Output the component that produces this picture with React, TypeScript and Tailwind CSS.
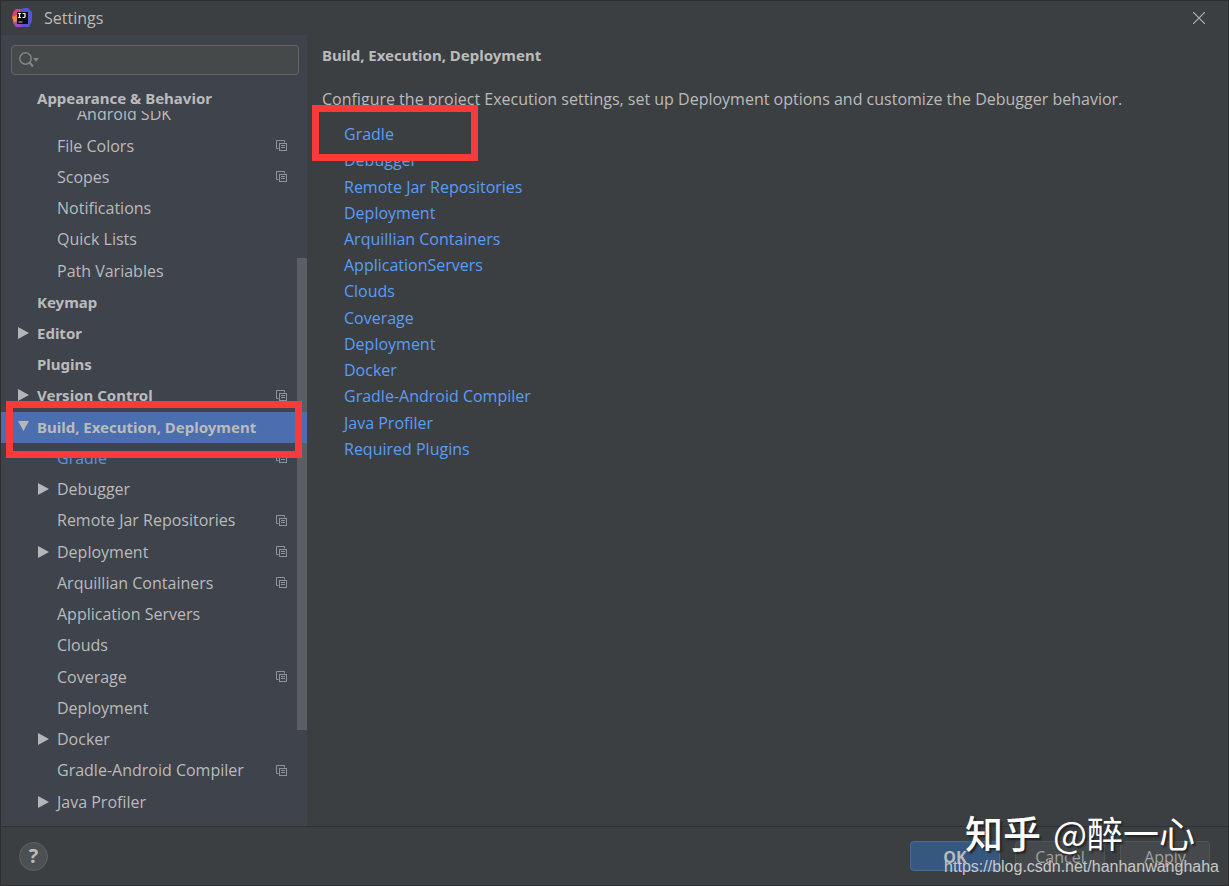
import { useState } from 'react';

type TreeItem = {
  label: string;
  level: 0 | 1;
  arrow?: 'closed' | 'open';
  project?: boolean;
  selected?: boolean;
  modified?: boolean;
};

const treeItems: TreeItem[] = [
  { label: 'File Colors', level: 1, project: true },
  { label: 'Scopes', level: 1, project: true },
  { label: 'Notifications', level: 1 },
  { label: 'Quick Lists', level: 1 },
  { label: 'Path Variables', level: 1 },
  { label: 'Keymap', level: 0 },
  { label: 'Editor', level: 0, arrow: 'closed' },
  { label: 'Plugins', level: 0 },
  { label: 'Version Control', level: 0, arrow: 'closed', project: true },
  { label: 'Build, Execution, Deployment', level: 0, arrow: 'open', selected: true },
  { label: 'Gradle', level: 1, project: true, modified: true },
  { label: 'Debugger', level: 1, arrow: 'closed' },
  { label: 'Remote Jar Repositories', level: 1, project: true },
  { label: 'Deployment', level: 1, arrow: 'closed', project: true },
  { label: 'Arquillian Containers', level: 1, project: true },
  { label: 'Application Servers', level: 1 },
  { label: 'Clouds', level: 1 },
  { label: 'Coverage', level: 1, project: true },
  { label: 'Deployment', level: 1 },
  { label: 'Docker', level: 1, arrow: 'closed' },
  { label: 'Gradle-Android Compiler', level: 1, project: true },
  { label: 'Java Profiler', level: 1, arrow: 'closed' },
];

const links = [
  'Gradle',
  'Debugger',
  'Remote Jar Repositories',
  'Deployment',
  'Arquillian Containers',
  'ApplicationServers',
  'Clouds',
  'Coverage',
  'Deployment',
  'Docker',
  'Gradle-Android Compiler',
  'Java Profiler',
  'Required Plugins',
];

const AppIcon = () => (
  <svg viewBox="0 0 20 20" className="h-5 w-5" aria-hidden="true">
    <path d="M1 4 4 1h6l3 8-8 8-4-2 1-4-2-1z" fill="#d8436f" />
    <path d="M0 9 5 7v7l-3 1z" fill="#ee8544" />
    <path d="M8 3 11 0h5l4 4v9l-3 6h-6L4 16l8-4z" fill="#5457cf" />
    <path d="M1 15l4-2 6 6H4z" fill="#a04bb8" />
    <rect x="5" y="4" width="11" height="12" fill="#0b0a10" />
    <path d="M6 5.5h3M7.5 5.5v4M6 9.5h3M10.5 5.5h2.5v3q0 1-1 1h-1.5" stroke="#fff" strokeWidth="1.2" fill="none" />
    <path d="M6.5 14h4" stroke="#bbb" strokeWidth="1" />
  </svg>
);

const ProjectIcon = () => (
  <svg viewBox="0 0 11 11" className="h-[11px] w-[11px] shrink-0" fill="none" stroke="#8d949b" aria-hidden="true">
    <path d="M2.5 8.5h-2v-8h8v2" />
    <rect x="3.5" y="3.5" width="7" height="7" />
    <path d="M5 5.5h4M5 7.5h4" />
  </svg>
);

const Arrow = ({ open }: { open: boolean }) => (
  <svg viewBox="0 0 12 12" className="h-3 w-3" fill="#b4b6b8" aria-hidden="true">
    {open ? <path d="M1 0h11L6.5 10z" /> : <path d="M1 0v12l11-6z" />}
  </svg>
);

const TreeRow = ({ item }: { item: TreeItem }) => (
  <li className={`flex min-h-0 flex-1 items-center pb-0.5 pr-5 ${item.selected ? 'bg-[#4b6eaf]' : ''} ${item.level === 0 ? 'pl-4' : 'pl-9'}`}>
    <span className="w-5 shrink-0">{item.arrow && <Arrow open={item.arrow === 'open'} />}</span>
    <span
      className={`flex-1 whitespace-nowrap ${item.level === 0 ? "font-['Noto_Sans'] text-[15px] font-bold" : ''} ${item.modified ? 'text-[#5a93de]' : ''}`}
    >
      {item.label}
    </span>
    {item.project && <ProjectIcon />}
  </li>
);

const App = () => {
  const [query, setQuery] = useState('');

  return (
    <div className="relative flex h-screen flex-col overflow-hidden border border-[#2c2e30] bg-[#3c3f41] font-['Open_Sans','Noto_Sans',sans-serif] text-base leading-5 text-[#bbbbbb]">
      <header className="flex h-[34px] shrink-0 items-center pl-[11px] pr-[23px]">
        <AppIcon />
        <h1 className="ml-3 flex-1">Settings</h1>
        <button type="button" aria-label="Close">
          <svg viewBox="0 0 12 12" className="h-3 w-3" stroke="#b0b2b4" strokeWidth="1.2" aria-hidden="true">
            <path d="M0 0l12 12M12 0 0 12" />
          </svg>
        </button>
      </header>

      <div className="flex min-h-0 flex-1">
        <aside className="relative flex w-[306px] shrink-0 flex-col bg-[#3e434c] pb-2">
          <div className="relative mx-[10px] mr-2 mt-[10px] h-[30px] shrink-0">
            <svg viewBox="0 0 22 16" className="absolute left-2 top-[7px] h-4 w-[22px]" fill="none" aria-hidden="true">
              <circle cx="6.5" cy="6.5" r="5.7" stroke="#83888c" strokeWidth="1.4" />
              <path d="M10.5 10.5 14 14.5" stroke="#83888c" strokeWidth="2" />
              <path d="M14 6h6l-3 4z" fill="#7f8488" />
            </svg>
            <input
              type="text"
              aria-label="Search settings"
              value={query}
              onChange={(e) => setQuery(e.target.value)}
              className="h-full w-full rounded-sm border border-[#646769] bg-[#45494a] pl-9 outline-none"
            />
          </div>

          <div className="mt-3 flex h-6 shrink-0 items-center pb-0.5 pl-9 font-['Noto_Sans'] text-[15px] font-bold">
            Appearance &amp; Behavior
          </div>
          {/* scrolled partly under the sticky group title */}
          <div className="flex h-5 shrink-0 flex-col justify-end overflow-hidden">
            <div className="flex h-8 shrink-0 items-center pb-0.5 pl-19">Android SDK</div>
          </div>
          {/* scrollbar thumb, the selected row is painted over it */}
          <div className="absolute right-0 top-[223px] h-[472px] w-[10px] bg-[#5b5e64]" />
          <ul className="relative flex min-h-0 flex-1 flex-col">
            {treeItems.map((item, i) => (
              <TreeRow key={i} item={item} />
            ))}
          </ul>
          <div className="absolute left-[5px] top-[366px] h-[57px] w-[296px] border-[7px] border-[#f93a3a]" />
        </aside>

        <main className="relative flex-1 pl-[15px] pt-[10px]">
          <h2 className="font-['Noto_Sans'] text-[15px] font-bold">Build, Execution, Deployment</h2>
          <p className="mt-6">
            Configure the project Execution settings, set up Deployment options and customize the Debugger behavior.
          </p>
          <ul className="mt-3 grid h-[341px] auto-rows-fr pl-[22px] text-[#589df6]">
            {links.map((link, i) => (
              <li key={i} className="flex items-center">
                <a href="#">{link}</a>
              </li>
            ))}
          </ul>
          <div className="absolute left-[5px] top-[70px] h-[56px] w-[166px] border-[7px] border-[#f93a3a]" />
        </main>
      </div>

      <footer className="flex h-[59px] shrink-0 items-center justify-between border-t border-[#2f3133] pl-[18px] pr-[18px]">
        <button
          type="button"
          aria-label="Help"
          className="h-[29px] w-[29px] rounded-full border border-[#5e6264] bg-[#4c5052] text-xl font-bold leading-5"
        >
          ?
        </button>
        <div className="flex gap-[15px]">
          <button type="button" className="h-[30px] w-[90px] rounded-sm border border-[#4a6a94] bg-[#365880] pt-0.5 font-bold">
            OK
          </button>
          <button type="button" className="h-[30px] w-[90px] rounded-sm border border-[#515557] bg-[#46494b] pt-0.5 text-[#a0a2a4]">
            Cancel
          </button>
          <button type="button" className="h-[30px] w-[90px] rounded-sm border border-[#515557] bg-[#46494b] pt-0.5 text-[#a0a2a4]">
            Apply
          </button>
        </div>
      </footer>

      <div className="pointer-events-none absolute bottom-8 right-[33px] flex items-center gap-3 whitespace-nowrap font-['Noto_Sans_CJK_SC',sans-serif] text-4xl text-white [text-shadow:2px_2px_2px_#222]">
        <span className="text-[38px] font-medium">知乎</span>
        <span>@醉一心</span>
      </div>
      <div className="pointer-events-none absolute bottom-2 right-[9px] font-['Liberation_Sans',sans-serif] text-base leading-5 text-[#c8c8c8]">
        https://blog.csdn.net/hanhanwanghaha
      </div>
    </div>
  );
};

export default App;
